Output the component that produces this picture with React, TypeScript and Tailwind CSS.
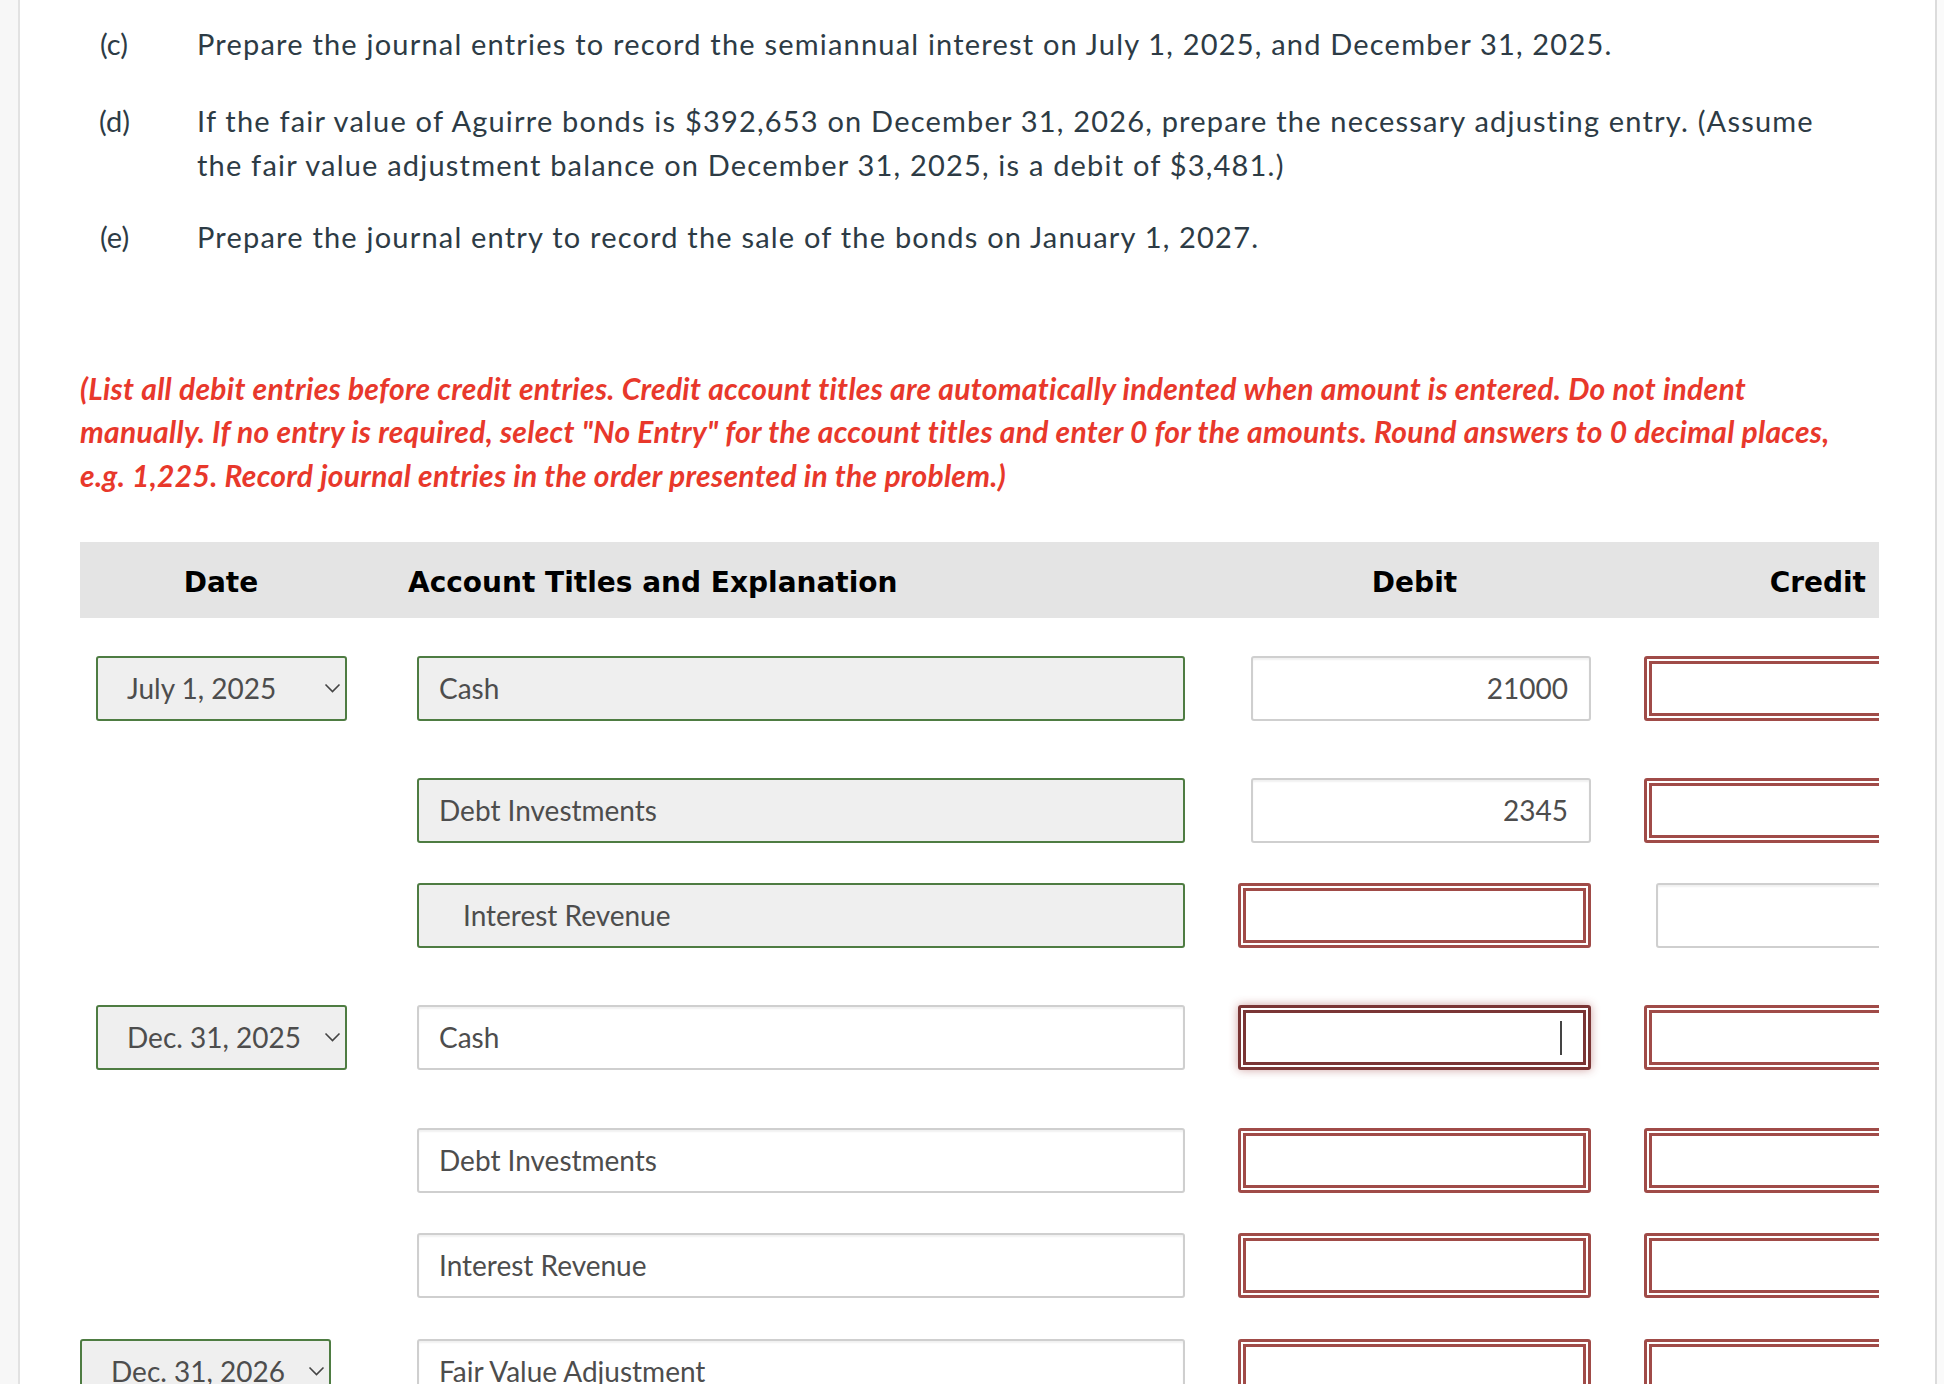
import React from "react";

const lato = { fontFamily: "Lato, 'Open Sans', sans-serif" };

function Chevron() {
  return (
    <svg width="17" height="11" viewBox="0 0 17 11" className="shrink-0">
      <path d="M1.5 1.5 L8.5 8.5 L15.5 1.5" fill="none" stroke="#444" strokeWidth="1.6" />
    </svg>
  );
}

function DateSelect({ label, shift }: { label: string; shift?: boolean }) {
  return (
    <div
      className={`${shift ? "ml-0" : "ml-[16px]"} w-[251px] h-[65px] shrink-0 flex items-center justify-between pl-[29px] pr-[4px] border-2 border-[#4e7c42] rounded-[3px] bg-[#efefef] text-[28px] text-[#4d4d4d]`}
      style={lato}
    >
      <span>{label}</span>
      <Chevron />
    </div>
  );
}

function Account({ label, green, indent }: { label: string; green?: boolean; indent?: boolean }) {
  return (
    <div
      className={`ml-[55px] w-[768px] h-[65px] shrink-0 flex items-center ${indent ? "pl-[44px]" : "pl-[20px]"} border-2 rounded-[3px] text-[28px] text-[#4d4d4d] ${
        green ? "border-[#4e7c42] bg-[#efefef]" : "border-[#cfcfcf] bg-white shadow-[inset_0_2px_2px_rgba(0,0,0,0.06)]"
      }`}
      style={lato}
    >
      {label}
    </div>
  );
}

function Plain({ value, ml, w }: { value?: string; ml: string; w: string }) {
  return (
    <div
      className={`${ml} ${w} h-[65px] shrink-0 flex items-center justify-end pr-[21px] border-2 border-[#cfcfcf] rounded-[3px] bg-white shadow-[inset_0_2px_2px_rgba(0,0,0,0.06)] text-[28px] text-[#4d4d4d]`}
      style={lato}
    >
      {value}
    </div>
  );
}

function Red({ ml, w, focused }: { ml: string; w: string; focused?: boolean }) {
  return (
    <div
      className={`${ml} ${w} h-[65px] shrink-0 relative border-[3px] rounded-[3px] bg-white ${
        focused
          ? "border-[#7a3535] shadow-[0_0_10px_rgba(150,50,50,0.45),inset_0_0_0_2px_#ffffff,inset_0_0_0_5px_#7a3535]"
          : "border-[#a04b48] shadow-[inset_0_0_0_2px_#ffffff,inset_0_0_0_5px_#a04b48]"
      }`}
    >
      {focused && <div className="absolute right-[26px] top-[13px] w-[2px] h-[34px] bg-[#444]" />}
    </div>
  );
}

export default function App() {
  return (
    <div className="w-[1944px] h-[1384px] overflow-hidden flex bg-white" style={lato}>
      <div className="w-[20px] shrink-0 bg-[#f7f7f7] border-r-2 border-[#e2e2e2]" />
      <div className="w-[1915px] shrink-0 pl-[60px] pt-[22px]">
        {/* problem items */}
        <div className="flex text-[29px] leading-[44px] tracking-[1.2px] text-[#2d3b45]">
          <div className="ml-[20px] w-[97px] shrink-0 tracking-normal">(c)</div>
          <div className="whitespace-nowrap">
            Prepare the journal entries to record the semiannual interest on July 1, 2025, and December 31, 2025.
          </div>
        </div>
        <div className="flex mt-[33px] text-[29px] leading-[44px] tracking-[1.2px] text-[#2d3b45]">
          <div className="ml-[19px] w-[98px] shrink-0 tracking-normal">(d)</div>
          <div>
            <div className="whitespace-nowrap">
              If the fair value of Aguirre bonds is $392,653 on December 31, 2026, prepare the necessary adjusting entry. (Assume
            </div>
            <div className="whitespace-nowrap">the fair value adjustment balance on December 31, 2025, is a debit of $3,481.)</div>
          </div>
        </div>
        <div className="flex mt-[28px] text-[29px] leading-[44px] tracking-[1.2px] text-[#2d3b45]">
          <div className="ml-[20px] w-[97px] shrink-0 tracking-normal">(e)</div>
          <div className="whitespace-nowrap">Prepare the journal entry to record the sale of the bonds on January 1, 2027.</div>
        </div>

        {/* instructions */}
        <div className="mt-[108px] text-[30px] leading-[43.3px] font-bold italic text-[#e8382b] tracking-[0.3px]">
          <div className="whitespace-nowrap">
            (List all debit entries before credit entries. Credit account titles are automatically indented when amount is entered. Do not indent
          </div>
          <div className="whitespace-nowrap">
            manually. If no entry is required, select "No Entry" for the account titles and enter 0 for the amounts. Round answers to 0 decimal places,
          </div>
          <div className="whitespace-nowrap">e.g. 1,225. Record journal entries in the order presented in the problem.)</div>
        </div>

        {/* table */}
        <div className="mt-[45px] w-[1799px] overflow-hidden">
          <div
            className="h-[76px] flex items-center pt-[6px] bg-[#e4e4e4] text-[28px] font-bold text-black"
            style={{ fontFamily: "'DejaVu Sans', Verdana, sans-serif" }}
          >
            <div className="w-[282px] text-center">Date</div>
            <div className="w-[876px] pl-[46px]">Account Titles and Explanation</div>
            <div className="w-[353px] text-center">Debit</div>
            <div className="flex-1 text-right pr-[13px]">Credit</div>
          </div>

          <div className="mt-[38px] flex items-center">
            <div className="w-[282px] shrink-0">
              <DateSelect label="July 1, 2025" />
            </div>
            <Account label="Cash" green />
            <Plain value="21000" ml="ml-[66px]" w="w-[340px]" />
            <Red ml="ml-[53px]" w="w-[300px]" />
          </div>

          <div className="mt-[57px] flex items-center">
            <div className="w-[282px] shrink-0" />
            <Account label="Debt Investments" green />
            <Plain value="2345" ml="ml-[66px]" w="w-[340px]" />
            <Red ml="ml-[53px]" w="w-[300px]" />
          </div>

          <div className="mt-[40px] flex items-center">
            <div className="w-[282px] shrink-0" />
            <Account label="Interest Revenue" green indent />
            <Red ml="ml-[53px]" w="w-[353px]" />
            <Plain ml="ml-[65px]" w="w-[300px]" />
          </div>

          <div className="mt-[57px] flex items-center">
            <div className="w-[282px] shrink-0">
              <DateSelect label="Dec. 31, 2025" />
            </div>
            <Account label="Cash" />
            <Red ml="ml-[53px]" w="w-[353px]" focused />
            <Red ml="ml-[53px]" w="w-[300px]" />
          </div>

          <div className="mt-[58px] flex items-center">
            <div className="w-[282px] shrink-0" />
            <Account label="Debt Investments" />
            <Red ml="ml-[53px]" w="w-[353px]" />
            <Red ml="ml-[53px]" w="w-[300px]" />
          </div>

          <div className="mt-[40px] flex items-center">
            <div className="w-[282px] shrink-0" />
            <Account label="Interest Revenue" />
            <Red ml="ml-[53px]" w="w-[353px]" />
            <Red ml="ml-[53px]" w="w-[300px]" />
          </div>

          <div className="mt-[41px] flex items-center">
            <div className="w-[282px] shrink-0">
              <DateSelect label="Dec. 31, 2026" shift />
            </div>
            <Account label="Fair Value Adjustment" />
            <Red ml="ml-[53px]" w="w-[353px]" />
            <Red ml="ml-[53px]" w="w-[300px]" />
          </div>
        </div>
      </div>
      <div className="flex-1 border-l-2 border-[#dcdcdc] bg-[#fafafa]" />
    </div>
  );
}
